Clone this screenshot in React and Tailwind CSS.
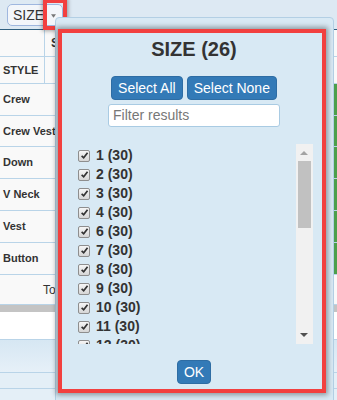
import React from "react";

const sizes = ["1", "2", "3", "4", "6", "7", "8", "9", "10", "11", "12", "13"];

function Check() {
  return (
    <span className="flex h-[12px] w-[12px] shrink-0 items-center justify-center rounded-[2px] border border-[#8e8e8e] bg-gradient-to-b from-[#f6f6f6] to-[#d6d6d6]">
      <svg viewBox="0 0 10 10" className="h-[9px] w-[9px]">
        <path d="M1.8 5.4 L4.1 7.6 L8.4 2" fill="none" stroke="#333" strokeWidth="1.9" />
      </svg>
    </span>
  );
}

function Row({ h, label, green, divided, children }) {
  return (
    <div className={`flex border-b border-[#b9d4e8] bg-[#f9f9f9] ${h}`}>
      <div
        className={`flex shrink-0 items-center overflow-hidden whitespace-nowrap pl-[3px] text-[11px] font-bold text-[#333] ${
          divided ? "w-[45px] border-r border-[#b9d4e8]" : "w-[70px]"
        }`}
      >
        {label}
      </div>
      <div className="flex flex-1 items-center overflow-hidden">{children}</div>
      <div className={`w-[4px] shrink-0 border-l border-[#b9d4e8] ${green ? "bg-[#4c9f4c]" : ""}`} />
    </div>
  );
}

export default function App() {
  return (
    <div className="relative h-[400px] w-[337px] overflow-hidden bg-[#dde9f3] font-['Liberation_Sans',Arial,sans-serif]">
      {/* top bar */}
      <div className="flex h-[30px] items-start border-b border-[#2f5f80] pl-[7px] pt-[4px]">
        <div className="flex h-[22px] items-center gap-[7px] rounded-[5px] border border-[#9fb7df] bg-[#f3f6fa] pl-[5px] pr-[6px] text-[14px] text-[#333]">
          <span>SIZE</span>
          <svg viewBox="0 0 6 4" className="mt-[1px] h-[4px] w-[5px]">
            <path d="M0 0 L6 0 L3 4 Z" fill="#777" />
          </svg>
        </div>
      </div>

      {/* background table */}
      <Row h="h-[27px]" label="" divided>
        <span className="pl-[6px] text-[12px] font-bold text-[#333]">SIZE</span>
      </Row>
      <Row h="h-[27px]" label="STYLE" divided />
      <Row h="h-[32px]" label="Crew" green />
      <Row h="h-[31px]" label="Crew Vest" green />
      <Row h="h-[32px]" label="Down" green />
      <Row h="h-[32px]" label="V Neck" green />
      <Row h="h-[32px]" label="Vest" green />
      <Row h="h-[32px]" label="Button" green />
      <div className="flex h-[30px] items-center border-b border-[#b9d4e8] bg-[#f9f9f9] pl-[43px] text-[12px] text-[#333]">
        Total
      </div>
      <div className="h-[7px] bg-[#c4c4c4]" />
      <div className="h-[28px] border-b border-[#b9d4e8] bg-white" />
      <div className="h-[33px] border-b border-[#b9d4e8] bg-gradient-to-b from-[#d6e7f3] to-[#e6f0f8]" />
      <div className="h-[16px] border-b border-[#b9d4e8] bg-[#e4eff7]" />
      <div className="h-[20px] bg-[#e4eff7]" />

      {/* red highlight on dropdown arrow */}
      <div className="absolute left-[43px] top-[-1px] h-[31px] w-[24px] border-4 border-[#f2403f] shadow-[0_0_4px_1px_rgba(0,0,0,0.35)]" />

      {/* popup panel */}
      <div className="absolute left-[55px] top-[17px] h-[400px] w-[279px] rounded-t-[4px] border border-[#b3cfe4] bg-[#d8e9f4]">
        <div className="ml-[2px] mt-[11px] flex h-[364px] w-[268px] flex-col items-center border-4 border-[#f2403f] shadow-[0_0_5px_2px_rgba(0,0,0,0.35)]">
          <div className="ml-[4px] mt-[4px] h-[24px] text-[20px] font-bold leading-[24px] text-[#333]">SIZE (26)</div>
          <div className="ml-[4px] mt-[15px] flex gap-[4px]">
            <button className="h-[24px] rounded-[4px] border border-[#2e6da4] bg-[#337ab7] px-[6px] text-[14px] leading-[22px] text-white">
              Select All
            </button>
            <button className="h-[24px] rounded-[4px] border border-[#2e6da4] bg-[#337ab7] px-[6px] text-[14px] leading-[22px] text-white">
              Select None
            </button>
          </div>
          <div className="ml-[4px] mt-[4px] flex h-[23px] w-[172px] items-center rounded-[3px] border border-[#a9cbe3] bg-white pl-[4px] text-[14px] text-[#777]">
            Filter results
          </div>
          <div className="ml-[13px] mt-[17px] flex h-[200px] w-[238px] self-start overflow-hidden pl-[3px]">
            <div className="flex-1 overflow-hidden pt-[2px]">
              {sizes.map((s) => (
                <div key={s} className="flex h-[19px] items-center gap-[6px] whitespace-nowrap text-[14px] font-bold text-[#333]">
                  <Check />
                  <span>{s} (30)</span>
                </div>
              ))}
            </div>
            <div className="relative h-[200px] w-[17px] shrink-0 bg-[#f1f1f1]">
              <svg viewBox="0 0 8 4" className="absolute left-[4px] top-[7px] h-[4px] w-[8px]">
                <path d="M0 4 L8 4 L4 0 Z" fill="#a3a3a3" />
              </svg>
              <div className="absolute left-[2px] top-[17px] h-[67px] w-[13px] bg-[#c1c1c1]" />
              <svg viewBox="0 0 8 4" className="absolute left-[4px] top-[189px] h-[4px] w-[8px]">
                <path d="M0 0 L8 0 L4 4 Z" fill="#505050" />
              </svg>
            </div>
          </div>
          <button className="ml-[4px] mt-[16px] h-[24px] rounded-[4px] border border-[#2e6da4] bg-[#337ab7] px-[6px] text-[14px] leading-[22px] text-white">
            OK
          </button>
        </div>
      </div>
    </div>
  );
}
